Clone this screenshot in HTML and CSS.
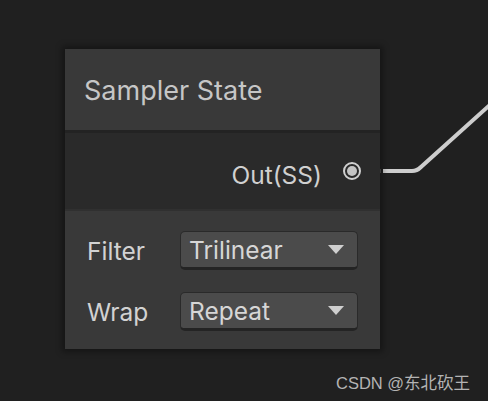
FILE: index.html
```html
<!DOCTYPE html>
<html>
<head>
<meta charset="utf-8">
<link rel="stylesheet" href="styles.css">
</head>
<body>
<div class="canvas">
  <svg class="wire" width="488" height="401" viewBox="0 0 488 401">
    <line x1="361" y1="171" x2="381" y2="171" stroke="#4f4f4f" stroke-width="4"/>
    <path d="M383 171 H412 Q417 171 421 167 L492 103" fill="none" stroke="#cdcdcd" stroke-width="4"/>
  </svg>
  <div class="node">
    <div class="node-title">Sampler State</div>
    <div class="node-ports">
      <span class="port-label">Out(SS)</span>
      <span class="port-dot"><span class="port-inner"></span></span>
    </div>
    <div class="node-params">
      <div class="param-row">
        <span class="param-label">Filter</span>
        <div class="dropdown"><span class="dd-text">Trilinear</span><span class="dd-arrow"></span></div>
      </div>
      <div class="param-row">
        <span class="param-label">Wrap</span>
        <div class="dropdown"><span class="dd-text">Repeat</span><span class="dd-arrow"></span></div>
      </div>
    </div>
  </div>
  <div class="watermark">CSDN @东北砍王</div>
</div>
</body>
</html>
```
FILE: styles.css
```css
html, body {
  margin: 0;
  padding: 0;
  background: #202020;
}
body {
  width: 488px;
  height: 401px;
  overflow: hidden;
  font-family: Inter, "Noto Sans", "Noto Sans CJK SC", sans-serif;
}
.canvas {
  position: relative;
  width: 488px;
  height: 401px;
  padding-top: 49px;
  box-sizing: border-box;
}
.wire {
  position: absolute;
  left: 0;
  top: 0;
}
.node {
  position: relative;
  margin-left: 65px;
  width: 315px;
  height: 300px;
  display: flex;
  flex-direction: column;
  background: #393939;
  box-shadow: 0 0 6px 3px rgba(0,0,0,0.35);
}
.node-title {
  height: 84px;
  flex: none;
  box-sizing: border-box;
  padding-left: 19px;
  padding-top: 2px;
  display: flex;
  align-items: center;
  color: #c6c6c6;
  font-size: 27px;
  background: #393939;
  border-bottom: 3px solid #232323;
}
.node-ports {
  height: 78px;
  flex: none;
  box-sizing: border-box;
  display: flex;
  align-items: center;
  justify-content: flex-end;
  padding-right: 19px;
  background: #2a2a2a;
  border-bottom: 2px solid #303030;
}
.port-label {
  color: #d0d0d0;
  font-size: 24.5px;
  margin-right: 21px;
  position: relative;
  top: 4px;
}
.port-dot {
  width: 18px;
  height: 18px;
  box-sizing: border-box;
  border-radius: 50%;
  border: 2.5px solid #d0d0d0;
  background: #2a2a2a;
  display: flex;
  align-items: center;
  justify-content: center;
  position: relative;
  top: 0;
}
.port-inner {
  width: 10px;
  height: 10px;
  border-radius: 50%;
  background: #c4c4c4;
}
.node-params {
  flex: 1;
  display: flex;
  flex-direction: column;
  padding-top: 20px;
  gap: 22px;
  background: #393939;
}
.param-row {
  display: flex;
  align-items: center;
  padding-left: 22px;
}
.param-label {
  width: 93px;
  color: #d2d2d2;
  font-size: 24.5px;
}
.dropdown {
  width: 178px;
  height: 39px;
  box-sizing: border-box;
  border-radius: 5px;
  background: #4b4b4b;
  border: 1px solid #2a2a2a;
  border-bottom: 3px solid #242424;
  display: flex;
  align-items: center;
  justify-content: space-between;
  padding: 0 13px 0 8px;
}
.dd-text {
  color: #d6d6d6;
  font-size: 24.5px;
}
.dd-arrow {
  width: 0;
  height: 0;
  border-left: 8px solid transparent;
  border-right: 8px solid transparent;
  border-top: 9px solid #cfcfcf;
}
.watermark {
  position: absolute;
  left: 336px;
  top: 370px;
  color: #b4b4b4;
  font-size: 16.5px;
  font-family: "Liberation Sans", "Noto Sans CJK SC", sans-serif;
}
```
